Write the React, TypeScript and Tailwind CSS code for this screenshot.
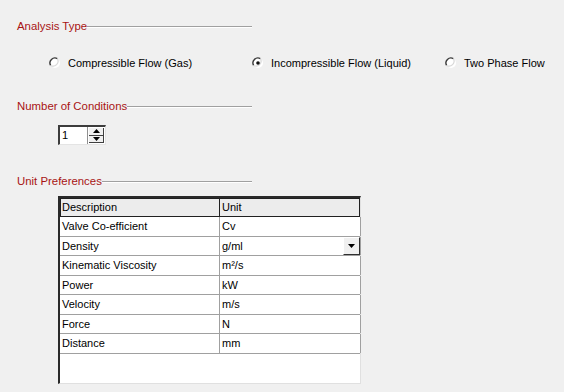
import React from "react";

const font = { fontFamily: '"Liberation Sans", Arial, sans-serif' };

/* ─── GROUP TITLE ──────────────────────────────────── */
const GroupTitle: React.FC<{ title: string }> = ({ title }) => (
    <div className="flex items-center w-[235px] h-[14px]">
        <span className="text-[11.4px] leading-[14px] text-[#a81414] whitespace-nowrap">{title}</span>
        <div className="flex-1 h-[2px] border-t border-[#a0a0a0] border-b-white mt-[2px] bg-white" />
    </div>
);

const RadioIcon: React.FC<{ checked?: boolean }> = ({ checked }) => (
    <svg width="12" height="12" viewBox="0 0 12 12" className="shrink-0">
        <circle cx="6" cy="6" r="5" fill="#ffffff" />
        <path d="M1.6 8.4 A5 5 0 0 1 8.4 1.6" fill="none" stroke="#3a3a3a" strokeWidth="1.4" />
        <path d="M8.4 1.6 A5 5 0 0 1 1.6 8.4" fill="none" stroke="#d8d8d8" strokeWidth="1.2" />
        {checked && <circle cx="6" cy="6" r="1.8" fill="#111" />}
    </svg>
);

const Radio: React.FC<{ label: string; checked?: boolean; className?: string }> = ({ label, checked, className = "" }) => (
    <div className={`flex items-center gap-[7px] ${className}`}>
        <RadioIcon checked={checked} />
        <span className="text-[11px] leading-[14px] text-black whitespace-nowrap">{label}</span>
    </div>
);

const rows: [string, string][] = [
    ["Valve Co-efficient", "Cv"],
    ["Density", "g/ml"],
    ["Kinematic Viscosity", "m²/s"],
    ["Power", "kW"],
    ["Velocity", "m/s"],
    ["Force", "N"],
    ["Distance", "mm"],
];

export default function App() {
    return (
        <div className="w-[564px] h-[392px] bg-[#f0f0f0] overflow-hidden" style={font}>
            <div className="pl-[17px] pt-[19px]">
                <GroupTitle title="Analysis Type" />
            </div>

            <div className="flex pt-[23px] pl-[49px]">
                <Radio label="Compressible Flow (Gas)" className="w-[203px]" />
                <Radio label="Incompressible Flow (Liquid)" checked className="w-[193px]" />
                <Radio label="Two Phase Flow" />
            </div>

            <div className="pl-[17px] pt-[29px]">
                <GroupTitle title="Number of Conditions" />
            </div>

            {/* spin box */}
            <div className="pl-[58px] pt-[12px]">
                <div className="flex w-[48px] h-[20px] bg-white border-t-2 border-l-2 border-[#3c3c3c] border-r border-b border-r-[#e4e4e4] border-b-[#e4e4e4]">
                    <span className="flex-1 text-[11px] leading-[17px] pl-[2px] text-black">1</span>
                    <div className="w-[1px] bg-[#909090] mr-[1px]" />
                    <div className="flex flex-col w-[15px] py-[1px] mr-[1px]">
                        <div className="flex-1 flex items-center justify-center bg-[#f0f0f0] border-b border-[#404040] border-r border-r-[#404040]">
                            <svg width="7" height="4" viewBox="0 0 7 4"><path d="M0 4 L3.5 0 L7 4 Z" fill="#000" /></svg>
                        </div>
                        <div className="flex-1 flex items-center justify-center bg-[#f0f0f0] border-b border-[#404040] border-r border-r-[#404040]">
                            <svg width="7" height="4" viewBox="0 0 7 4"><path d="M0 0 L7 0 L3.5 4 Z" fill="#000" /></svg>
                        </div>
                    </div>
                </div>
            </div>

            <div className="pl-[17px] pt-[29px]">
                <GroupTitle title="Unit Preferences" />
            </div>

            {/* grid */}
            <div className="pl-[58px] pt-[8px]">
                <div className="w-[303px] h-[188px] bg-white border-t-2 border-l-2 border-[#2a2a2a] border-r border-b border-r-[#e0e0e0] border-b-[#e0e0e0]">
                    <div className="grid grid-cols-[159px_141px] h-[19px] bg-[#ececec] border border-[#202020] text-[11px] leading-[17px] text-black">
                        <div className="pl-[1px] border-r border-[#202020]">Description</div>
                        <div className="pl-[2px]">Unit</div>
                    </div>
                    {rows.map(([d, u]) => (
                        <div key={d} className="grid grid-cols-[160px_141px] h-[19.5px] border-b border-[#a0a0a0] text-[11px] leading-[18px] text-black">
                            <div className="pl-[2px] border-r border-[#a0a0a0] whitespace-nowrap">{d}</div>
                            <div className="flex items-stretch border-r border-[#a0a0a0]">
                                <span className="flex-1 pl-[2px]">{u}</span>
                                {d === "Density" && (
                                    <div className="w-[17px] flex items-center justify-center bg-[#f0f0f0] border-l border-t border-white border-r border-b border-r-[#303030] border-b-[#303030]">
                                        <svg width="7" height="4" viewBox="0 0 7 4"><path d="M0 0 L7 0 L3.5 4 Z" fill="#000" /></svg>
                                    </div>
                                )}
                            </div>
                        </div>
                    ))}
                </div>
            </div>
        </div>
    );
}
